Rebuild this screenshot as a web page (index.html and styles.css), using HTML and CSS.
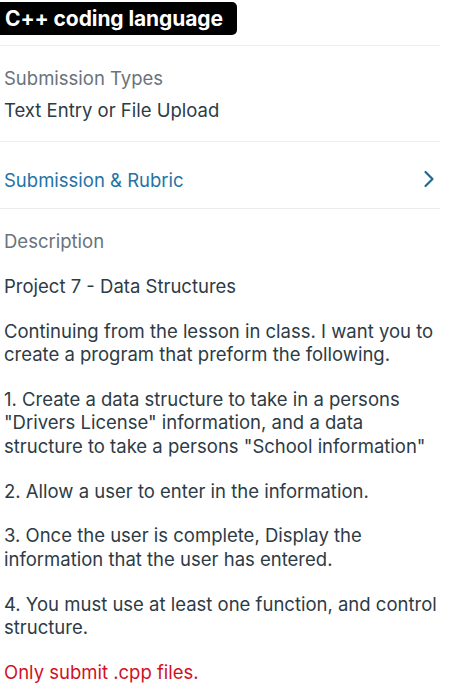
FILE: index.html
```html
<!DOCTYPE html>
<html>
<head>
<meta charset="utf-8">
<link rel="stylesheet" href="styles.css">
</head>
<body>
<div class="page">
  <div class="title-wrap"><span class="title">C++ coding language</span></div>
  <div class="section types">
    <div class="label">Submission Types</div>
    <div class="value">Text Entry or File Upload</div>
  </div>
  <div class="section rubric">
    <span class="link">Submission &amp; Rubric</span>
    <svg class="chev" width="12" height="18" viewBox="0 0 12 18"><path d="M2.5 2 L9.5 9 L2.5 16" fill="none" stroke="#1f6a93" stroke-width="2.2" stroke-linecap="round" stroke-linejoin="round"/></svg>
  </div>
  <div class="section desc">
    <p class="label">Description</p>
    <p>Project 7 - Data Structures</p>
    <p>Continuing from the lesson in class. I want you to create a program that preform the following.</p>
    <p>1. Create a data structure to take in a persons "Drivers License" information, and a data structure to take a persons "School information"</p>
    <p>2. Allow a user to enter in the information.</p>
    <p>3. Once the user is complete, Display the information that the user has entered.</p>
    <p>4. You must use at least one function, and control structure.</p>
    <p class="warn">Only submit .cpp files.</p>
  </div>
</div>
</body>
</html>
```

FILE: styles.css
```css
html, body {
  margin: 0;
  padding: 0;
  background: #fff;
}
body {
  font-family: Inter, "Noto Sans", sans-serif;
  font-size: 18.5px;
  line-height: 23.5px;
  color: #2d3b45;
}
.page {
  width: 440px;
}
.title-wrap {
  padding-top: 2px;
  height: 33px;
  border-bottom: 1px solid #ececec;
  padding-bottom: 10px;
}
.title {
  display: inline-block;
  background: #000;
  color: #fff;
  font-weight: 700;
  font-size: 21px;
  line-height: 33px;
  height: 33px;
  padding: 0 14px 0 5px;
  border-radius: 0 5px 5px 0;
  letter-spacing: -0.1px;
}
.section {
  border-bottom: 1px solid #ececec;
  padding-left: 4px;
}
.types {
  padding-top: 21px;
  padding-bottom: 19px;
  display: flex;
  flex-direction: column;
  gap: 8px;
}
.label {
  color: #68737c;
}
.rubric {
  display: flex;
  align-items: center;
  justify-content: space-between;
  height: 67px;
  padding-top: 11px;
  box-sizing: border-box;
  padding-right: 5px;
}
.link {
  color: #1f74a5;
}
.chev {
  display: block;
  margin-top: -3px;
}
.desc {
  border-bottom: none;
  padding-top: 21px;
}
.desc p {
  margin: 0 0 21.3px 0;
}
.warn {
  color: #d0111f;
}
```
